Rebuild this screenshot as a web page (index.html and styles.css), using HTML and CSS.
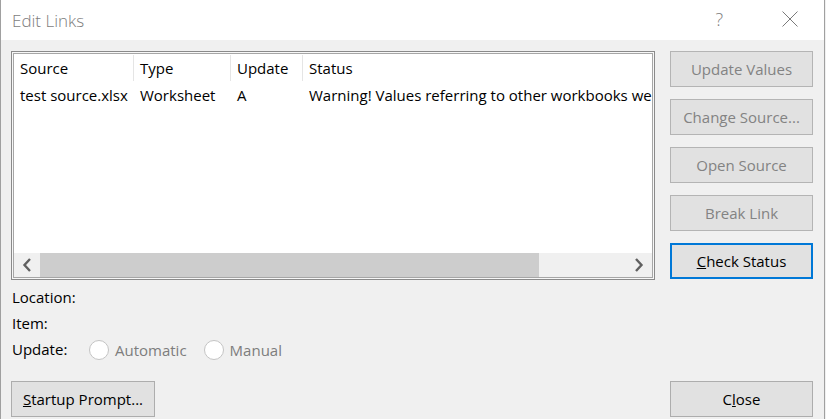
FILE: index.html
```html
<!DOCTYPE html>
<html>
<head>
<meta charset="utf-8">
<link rel="stylesheet" href="styles.css">
</head>
<body>
<div class="window">
  <div class="titlebar">
    <div class="title">Edit Links</div>
    <div class="help">?</div>
    <div class="close-x">
      <svg width="16" height="16" viewBox="0 0 16 16"><path d="M0.5 0.5 L15.5 15.5 M15.5 0.5 L0.5 15.5" stroke="#7a7a7a" stroke-width="1" fill="none"/></svg>
    </div>
  </div>
  <div class="content">
    <div class="main">
      <div class="listbox">
        <div class="listinner">
          <div class="table">
            <div class="hrow">
              <div class="c c1 h">Source</div>
              <div class="c c2 h">Type</div>
              <div class="c c3 h">Update</div>
              <div class="c c4">Status</div>
            </div>
            <div class="drow">
              <div class="c c1">test source.xlsx</div>
              <div class="c c2">Worksheet</div>
              <div class="c c3">A</div>
              <div class="c c4">Warning! Values referring to other workbooks we</div>
            </div>
          </div>
          <div class="hscroll">
            <div class="arrow">
              <svg width="10" height="14" viewBox="0 0 10 14"><path d="M8 1 L2.5 7 L8 13" stroke="#606060" stroke-width="2.4" fill="none"/></svg>
            </div>
            <div class="track"><div class="thumb"></div></div>
            <div class="arrow">
              <svg width="10" height="14" viewBox="0 0 10 14"><path d="M2 1 L7.5 7 L2 13" stroke="#606060" stroke-width="2.4" fill="none"/></svg>
            </div>
          </div>
        </div>
      </div>
      <div class="buttons">
        <div class="btn disabled">Update Values</div>
        <div class="btn disabled">Change Source...</div>
        <div class="btn disabled">Open Source</div>
        <div class="btn disabled">Break Link</div>
        <div class="btn focused"><span><u>C</u>heck Status</span></div>
      </div>
    </div>
    <div class="info">
      <div class="irow"><span class="lbl">Location:</span></div>
      <div class="irow"><span class="lbl">Item:</span></div>
      <div class="irow">
        <span class="lbl upd">Update:</span>
        <span class="radio"></span><span class="rtext">Automatic</span>
        <span class="radio r2"></span><span class="rtext">Manual</span>
      </div>
    </div>
    <div class="bottom">
      <div class="btn startup"><span><u>S</u>tartup Prompt...</span></div>
      <div class="btn"><span>C<u>l</u>ose</span></div>
    </div>
  </div>
</div>
</body>
</html>
```

FILE: styles.css
```css
html, body {
  margin: 0;
  padding: 0;
  background: #f0f0f0;
}
body {
  font-family: "Open Sans", "Noto Sans", sans-serif;
  font-size: 15px;
  color: #000;
}
.window {
  width: 825px;
  height: 419px;
  box-sizing: border-box;
  border-left: 1px solid #a0a0a0;
  border-right: 1px solid #a0a0a0;
  background: #f0f0f0;
  overflow: hidden;
}
.titlebar {
  height: 40px;
  background: #fff;
  display: flex;
  align-items: center;
}
.title {
  padding-left: 11px;
  font-size: 17px;
  font-weight: 300;
  color: #7d7d7d;
  flex: 1;
}
.help {
  font-size: 18px;
  font-weight: 300;
  color: #7d7d7d;
  margin-right: 59px;
  margin-top: -2px;
}
.close-x {
  width: 16px;
  height: 16px;
  margin-right: 26px;
  margin-top: -2px;
}
.content {
  padding: 11px 11px 0 10px;
}
.main {
  display: flex;
  gap: 15px;
}
.listbox {
  width: 644px;
  height: 229px;
  box-sizing: border-box;
  border: 1px solid #8a8a8a;
  padding: 1px;
  background: #f7f7f7;
}
.listinner {
  height: 100%;
  box-sizing: border-box;
  border: 1px solid #a6a6a6;
  background: #fff;
  display: flex;
  flex-direction: column;
  overflow: hidden;
}
.table {
  flex: 1;
  overflow: hidden;
}
.hrow, .drow {
  display: flex;
  white-space: nowrap;
}
.hrow {
  height: 28px;
  align-items: center;
}
.drow {
  height: 26px;
  align-items: center;
}
.c {
  box-sizing: border-box;
  padding-left: 6px;
  flex: none;
  overflow: hidden;
}
.h {
  border-right: 1px solid #e5e5e5;
  height: 26px;
  line-height: 26px;
}
.c1 { width: 120px; }
.c2 { width: 97px; }
.c3 { width: 72px; }
.c4 { width: 349px; overflow: visible; }
.hscroll {
  height: 24px;
  display: flex;
  background: #f0f0f0;
}
.arrow {
  width: 26px;
  display: flex;
  align-items: center;
  justify-content: center;
}
.track {
  flex: 1;
  display: flex;
}
.thumb {
  width: 499px;
  background: #cdcdcd;
}
.buttons {
  width: 143px;
  display: flex;
  flex-direction: column;
  gap: 12px;
}
.btn {
  height: 36px;
  box-sizing: border-box;
  border: 1px solid #adadad;
  background: #e1e1e1;
  display: flex;
  align-items: center;
  justify-content: center;
  width: 143px;
}
.btn.disabled {
  color: #838383;
  border-color: #b4b4b4;
}
.btn.focused {
  border: 2px solid #0078d7;
}
.info {
  margin-top: 4px;
}
.irow {
  height: 26px;
  display: flex;
  align-items: center;
  padding-left: 1px;
}
.lbl.upd {
  width: 77px;
}
.radio {
  width: 20px;
  height: 20px;
  box-sizing: border-box;
  border: 1px solid #c4c4c4;
  border-radius: 50%;
  background: #fff;
  flex: none;
  margin-top: 2px;
}
.rtext {
  color: #7d7d7d;
  margin-left: 6px;
  margin-top: 2px;
}
.r2 {
  margin-left: 17px;
}
.bottom {
  margin-top: 19px;
  display: flex;
  justify-content: space-between;
}
.btn.startup {
  width: 144px;
}
```
